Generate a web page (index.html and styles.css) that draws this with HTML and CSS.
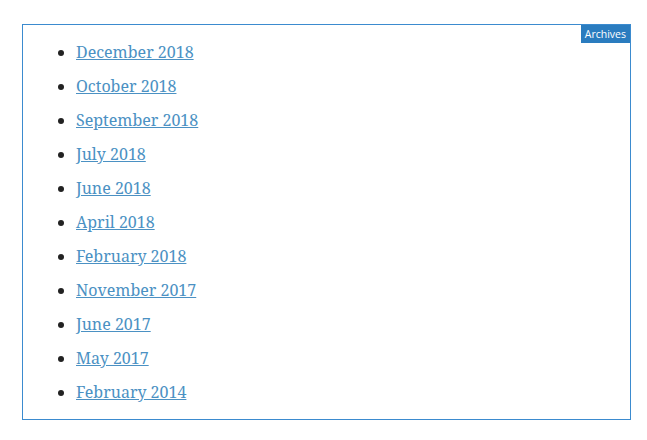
FILE: index.html
```html
<!DOCTYPE html>
<html lang="en">
<head>
    <meta charset="UTF-8">
    <meta name="viewport" content="width=device-width, initial-scale=1.0">
    <title>Archives</title>
    <link rel="stylesheet" href="styles.css">
</head>
<body>

    <div class="widget">
        <span class="widget-title">Archives</span>
        <ul class="archive-list">
            <li><a href="#">December 2018</a></li>
            <li><a href="#">October 2018</a></li>
            <li><a href="#">September 2018</a></li>
            <li><a href="#">July 2018</a></li>
            <li><a href="#">June 2018</a></li>
            <li><a href="#">April 2018</a></li>
            <li><a href="#">February 2018</a></li>
            <li><a href="#">November 2017</a></li>
            <li><a href="#">June 2017</a></li>
            <li><a href="#">May 2017</a></li>
            <li><a href="#">February 2014</a></li>
        </ul>
    </div>

</body>
</html>
```

FILE: styles.css
```css
body {
    margin: 0;
    padding: 24px 16px 0 22px;
    background-color: #fff;
    font-family: "Noto Serif", "DejaVu Serif", serif;
}
.widget {
    position: relative;
    width: 607px;
    height: 394px;
    border: 1px solid #3b8bcf;
}
.widget-title {
    position: absolute;
    top: 0;
    right: 0;
    padding: 0 4px;
    height: 18px;
    line-height: 18px;
    background-color: #2a7cbf;
    color: #fff;
    font-family: "Open Sans", sans-serif;
    font-size: 10.5px;
    font-weight: 500;
}
.archive-list {
    margin: 10px 0 0;
    padding-left: 53px;
    color: #222;
}
.archive-list li {
    font-size: 16px;
    line-height: 34px;
}
.archive-list a {
    color: #4b91c3;
    text-decoration: underline;
}
```
